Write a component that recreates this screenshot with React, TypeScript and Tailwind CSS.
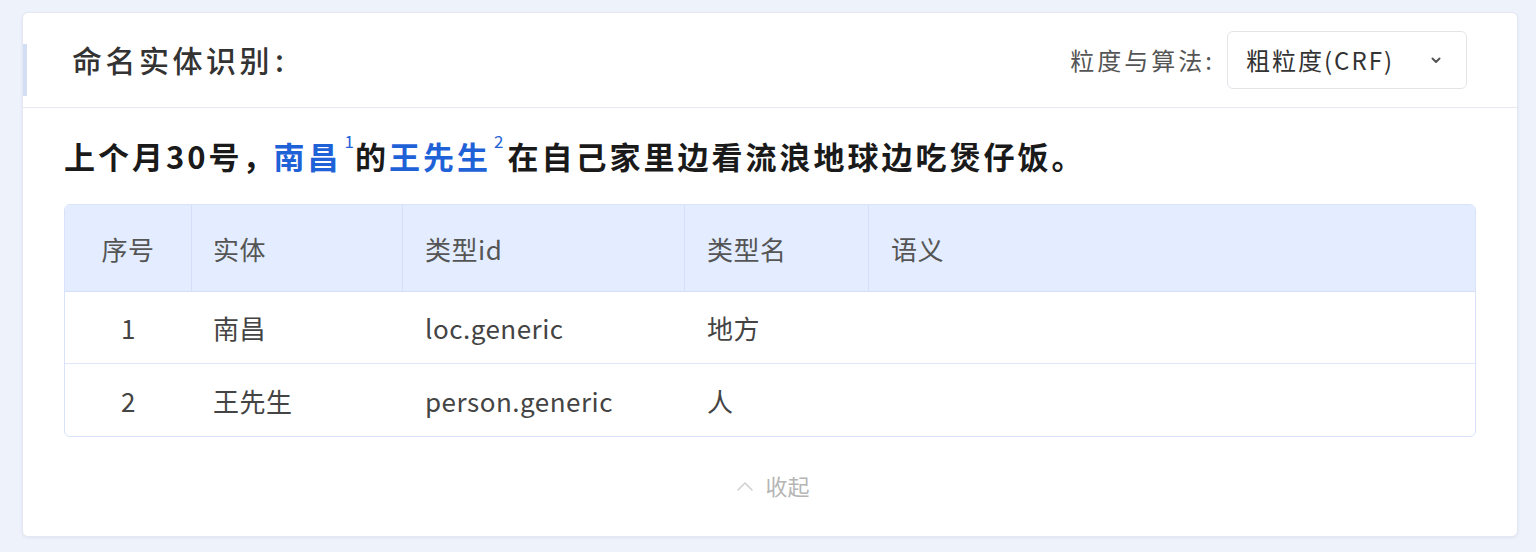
import React from "react";

const rows = [
  { id: "1", entity: "南昌", typeId: "loc.generic", typeName: "地方", sem: "" },
  { id: "2", entity: "王先生", typeId: "person.generic", typeName: "人", sem: "" },
];

export default function App() {
  return (
    <div
      className="w-[1536px] h-[552px] bg-[#eef2fb] pt-[12px] pl-[22px]"
      style={{ fontFamily: '"Noto Sans CJK SC", "Noto Sans", sans-serif' }}
    >
      <div className="w-[1496px] h-[525px] bg-white rounded-[6px] border border-[#e3e8f2] shadow-[0_1px_3px_rgba(30,60,120,0.08)] flex flex-col overflow-hidden">
        {/* header */}
        <div className="h-[95px] shrink-0 border-b border-[#e6e9ef] flex items-center pr-[50px]">
          <div className="w-[5px] h-[52px] bg-[#d3def5] -ml-px self-end mb-[11px]" />
          <div className="ml-[45px] text-[30px] leading-none text-[#333] font-medium tracking-[3.5px] flex-1 -mt-[2px]">
            命名实体识别<span className="ml-[2px]">:</span>
          </div>
          <div className="flex items-center">
            <span className="text-[24px] text-[#555] tracking-[3px]">粒度与算法:</span>
            <div className="ml-[12px] w-[240px] h-[58px] border border-[#e2e4e8] rounded-[6px] flex items-center pl-[18px] pr-[24px]">
              <span className="flex-1 text-[24px] text-[#333] tracking-[2px]">粗粒度(CRF)</span>
              <svg width="12" height="8" viewBox="0 0 12 8" fill="none">
                <path d="M2.5 2.5l3.5 3.5 3.5-3.5" stroke="#555" strokeWidth="2" strokeLinecap="round" strokeLinejoin="round" />
              </svg>
            </div>
          </div>
        </div>

        {/* body */}
        <div className="px-[41px] flex-1 flex flex-col">
          <div className="mt-[27px] h-[40px] flex items-center text-[31px] font-bold text-[#1a1a1a] leading-none whitespace-nowrap tracking-[3px]">
            <span>上个月30号，</span>
            <span className="text-[#1f62d8] -ml-[3px]">南昌</span>
            <sup className="text-[17px] font-normal text-[#1f62d8] ml-[3px] mr-[1px] -translate-y-[6px] tracking-normal">1</sup>
            <span>的</span>
            <span className="text-[#1f62d8]">王先生</span>
            <sup className="text-[17px] font-normal text-[#1f62d8] ml-[3px] mr-[4px] -translate-y-[6px] tracking-normal">2</sup>
            <span>在自己家里边看流浪地球边吃煲仔饭。</span>
          </div>

          <div className="mt-[29px] border border-[#d8e3fb] rounded-[6px] overflow-hidden text-[26px] tracking-[0.5px]">
            <div className="flex h-[87px] bg-[#e3edff] text-[#555] border-b border-[#d4e0fb]">
              <div className="w-[127px] flex items-center justify-center border-r border-[#d4e0fb]">序号</div>
              <div className="w-[211px] flex items-center pl-[21px] border-r border-[#d4e0fb]">实体</div>
              <div className="w-[282px] flex items-center pl-[22px] border-r border-[#d4e0fb]">类型id</div>
              <div className="w-[184px] flex items-center pl-[22px] border-r border-[#d4e0fb]">类型名</div>
              <div className="flex-1 flex items-center pl-[22px]">语义</div>
            </div>
            {rows.map((r, i) => (
              <div
                key={r.id}
                className={`flex h-[72px] text-[#444] ${i === 0 ? "border-b border-[#dfe7fb]" : ""}`}
              >
                <div className="w-[127px] flex items-center justify-center">{r.id}</div>
                <div className="w-[211px] flex items-center pl-[21px]">{r.entity}</div>
                <div className="w-[282px] flex items-center pl-[22px]">{r.typeId}</div>
                <div className="w-[184px] flex items-center pl-[22px]">{r.typeName}</div>
                <div className="flex-1 flex items-center pl-[22px]">{r.sem}</div>
              </div>
            ))}
          </div>

          <div className="flex-1 flex items-center justify-center pb-[2px]">
            <div className="flex items-center gap-[11px] text-[22px] text-[#b5b5b5] ml-[6px]">
              <svg width="18" height="12" viewBox="0 0 18 12" fill="none">
                <path d="M2 10l7-7 7 7" stroke="#cfcfcf" strokeWidth="1.5" strokeLinecap="round" strokeLinejoin="round" />
              </svg>
              <span>收起</span>
            </div>
          </div>
        </div>
      </div>
    </div>
  );
}
